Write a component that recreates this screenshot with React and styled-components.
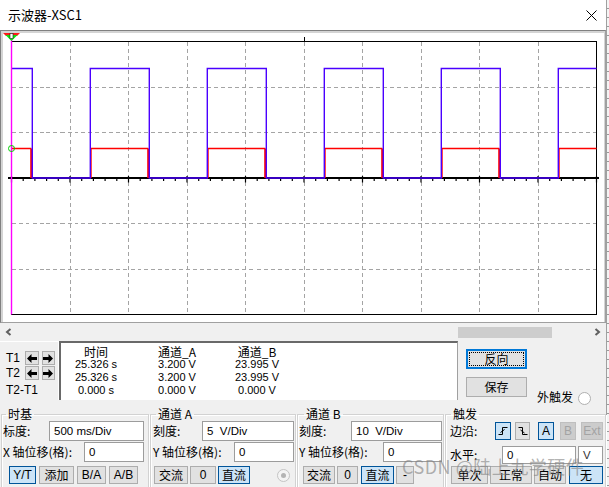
import React from 'react';
import styled, { createGlobalStyle } from 'styled-components';

const CJK = '"Noto Sans CJK SC", "Noto Sans", sans-serif';
const LATIN = '"Liberation Sans", "Noto Sans CJK SC", sans-serif';

const GlobalStyle = createGlobalStyle`
  html, body { margin: 0; padding: 0; }
  body {
    width: 609px; height: 487px; overflow: hidden;
    background: #f0f0f0; font-family: ${CJK}; color: #000;
  }
  * { box-sizing: border-box; }
`;

const Screen = styled.div`
  position: relative; display: flex; width: 609px; height: 487px; overflow: hidden;
`;
const Window = styled.div`
  width: 607px; height: 487px; flex: none; display: flex; flex-direction: column;
  border-right: 1px solid #a0a0a0; background: #f0f0f0;
`;
const Behind = styled.div`
  flex: 1;
  background: repeating-linear-gradient(to bottom, #f4f4f4 0 8px, #9a9a9a 8px 9px);
`;
const TitleBar = styled.div`
  height: 30px; flex: none; background: #fff; display: flex; align-items: center;
  justify-content: space-between; padding: 0 9px 0 8px;
`;
const Title = styled.span`font-size: 13px; line-height: 16px;`;

const ScopeFrame = styled.div`
  height: 293px; flex: none; display: flex;
  border-top: 1px solid #808080; border-left: 1px solid #808080;
  border-right: 1px solid #a0a0a0; border-bottom: 1px solid #a0a0a0;
  padding: 2px 1px 0 2px; background: #d4d4d4;
`;
const PlotArea = styled.div`flex: 1; background: #fff; overflow: hidden; display: flex;`;

const ScrollRow = styled.div`
  height: 18px; flex: none; display: flex; align-items: center; padding: 0 5px;
`;
const Track = styled.div`
  flex: 1; height: 100%; display: flex; align-items: center; padding-left: ${p => p.$offset}px;
`;
const Thumb = styled.div`width: 94px; height: 11px; background: #cdcdcd;`;

const Panel = styled.div`flex: 1; min-height: 0; display: flex; flex-direction: column;`;
const TopRow = styled.div`height: 59px; flex: none; display: flex;`;

const CursorPanel = styled.div`
  width: 59px; flex: none; border-top: 1px solid #fff; border-right: 1px solid #fff;
  padding: 9px 0 0 6px; display: flex; flex-direction: column;
`;
const CursorRow = styled.div`
  display: flex; align-items: center; height: 14px; margin-top: ${p => p.$mt || 0}px;
`;
const CursorLabel = styled.span`
  width: 20px; font-family: ${LATIN}; font-size: 12px; line-height: 14px;
`;
const ArrowBtn = styled.div`
  width: 14px; height: 14px; margin-right: 3px; background: #e1e1e1; border: 1px solid #adadad;
  display: flex; align-items: center; justify-content: center;
`;
const DiffLabel = styled.div`
  margin-top: 3px; font-family: ${LATIN}; font-size: 12px; line-height: 14px;
`;

const Readout = styled.div`
  width: 399px; flex: none; background: #fff;
  border-top: 2px solid #696969; border-left: 2px solid #696969; border-right: 1px solid #a0a0a0;
  padding-top: 2px; display: grid; grid-template-columns: 70px 92px 68px;
  grid-auto-rows: 13px; align-content: start;
`;
const HeadCell = styled.div`font-size: 12px; line-height: 13px; text-align: center; white-space: nowrap;`;
const ValueCell = styled.div`
  font-family: ${LATIN}; font-size: 11px; line-height: 13px; text-align: center; white-space: nowrap;
`;

const SideControls = styled.div`
  flex: 1; padding: 8px 0 0 8px; display: flex; flex-direction: column;
`;
const SideRow = styled.div`display: flex; align-items: flex-start; margin-top: ${p => p.$mt || 0}px;`;
const PushButton = styled.div`
  width: 61px; height: 20px; flex: none; background: #e1e1e1;
  border: 1px solid ${p => (p.$focused ? '#0078d7' : '#adadad')};
  box-shadow: ${p => (p.$focused ? 'inset 0 0 0 1px #0078d7' : 'none')};
  padding: ${p => (p.$focused ? '2px' : '0')};
  display: flex; align-items: stretch; justify-content: stretch;
  font-size: 12px; line-height: 14px;
`;
const FocusRing = styled.div`
  flex: 1; display: flex; align-items: center; justify-content: center;
  border: 1px dotted ${p => (p.$on ? '#000' : 'transparent')};
`;
const ExtLabel = styled.span`margin: 13px 0 0 10px; font-size: 12px; line-height: 14px;`;
const RadioRing = styled.div`
  width: 13px; height: 13px; border-radius: 50%; flex: none;
  border: 1px solid ${p => p.$ring || '#a9a9a9'}; background: ${p => p.$bg || '#fff'};
  margin: ${p => p.$m || '0'};
  display: flex; align-items: center; justify-content: center;
`;
const RadioDot = styled.div`width: 5px; height: 5px; border-radius: 50%; background: #b4b4b4;`;

const GroupRow = styled.div`
  flex: 1; min-height: 0; display: flex; gap: 1px; padding: 7px 0 0 1px;
`;
const Group = styled.fieldset`
  width: ${p => p.$w}px; height: 96px; flex: none; margin: 0; min-width: 0;
  padding: 0 ${p => p.$pr}px 0 ${p => p.$pl}px;
  border: 1px solid #d2d2d2; box-shadow: inset 1px 1px 0 #fff, 1px 1px 0 #fff;
`;
const Legend = styled.legend`
  margin-left: ${p => p.$ml}px; padding: 0 2px; font-size: 12px; line-height: 14px;
`;
const FieldRow = styled.div`
  display: flex; align-items: center; justify-content: space-between;
  height: ${p => p.$h || 20}px; margin-top: ${p => p.$mt || 0}px;
  padding-left: ${p => p.$pl || 0}px;
`;
const FieldLabel = styled.span`font-size: 12px; line-height: 16px; white-space: nowrap;`;
const Field = styled.div`
  width: ${p => p.$w}px; height: ${p => p.$h || 20}px; flex: none; background: #fff;
  border: 1px solid #9c9c9c; padding: 0 4px; display: flex; align-items: center;
  font-family: ${LATIN}; font-size: 11.5px; white-space: pre; color: ${p => p.$color || '#000'};
`;
const ButtonStrip = styled.div`
  display: flex; align-items: center; gap: ${p => p.$gap || 2}px;
  margin-left: ${p => (p.$auto ? 'auto' : '0')};
`;
const Btn = styled.div`
  width: ${p => p.$w}px; height: 18px; flex: none; margin-left: ${p => p.$ml || 0}px;
  display: flex; align-items: center; justify-content: center;
  font-family: ${p => (p.$latin ? LATIN : CJK)}; font-size: 12px; line-height: 14px;
  background: ${p => (p.$sel ? '#cce4f7' : p.$off ? '#cccccc' : '#e1e1e1')};
  border: 1px solid ${p => (p.$sel ? '#005499' : p.$off ? '#bfbfbf' : '#adadad')};
  color: ${p => (p.$off ? '#a3a3a3' : '#000')};
`;

const Watermark = styled.div`
  position: absolute; left: 402px; top: 454px; pointer-events: none;
  font-family: ${CJK}; font-size: 18px; line-height: 24px; letter-spacing: 0.5px;
  color: rgba(130, 130, 130, 0.62); white-space: nowrap;
`;

/* ---------- drawings ---------- */

const CloseIcon = () => (
  <svg width="11" height="11" viewBox="0 0 11 11">
    <path d="M0.5 0.5 L10.5 10.5 M10.5 0.5 L0.5 10.5" stroke="#000" strokeWidth="1" />
  </svg>
);

const Chevron = ({ dir }) => (
  <svg width="7" height="8" viewBox="0 0 7 8">
    <polyline
      points={dir === 'left' ? '5.5,1 2,4 5.5,7' : '1.5,1 5,4 1.5,7'}
      fill="none" stroke="#606060" strokeWidth="2"
    />
  </svg>
);

const Arrow = ({ dir }) => (
  <svg width="10" height="9" viewBox="0 0 10 9">
    <polygon
      points={dir === 'left'
        ? '0,4.5 4.5,0 4.5,3 10,3 10,6 4.5,6 4.5,9'
        : '10,4.5 5.5,0 5.5,3 0,3 0,6 5.5,6 5.5,9'}
      fill="#000"
    />
  </svg>
);

const EdgeIcon = ({ falling }) => (
  <svg width="12" height="12" viewBox="0 0 12 12">
    <path
      d={falling ? 'M1.5 2.5 H5.5 V9.5 H10.5' : 'M1.5 9.5 H5.5 V2.5 H10.5'}
      fill="none" stroke="#000" strokeWidth="1"
    />
    <path d={falling ? 'M3.5 5 L7.5 8' : 'M3.5 7.5 L7.5 4.5'} stroke="#000" strokeWidth="1" />
  </svg>
);

const L = 11.5, R = 596.5, T = 41.5, dx = 58.5, dy = 45.5;
const B = T + 6 * dy;
const CY = T + 3 * dy;
const HIGH_B = 68.5, HIGH_A = 148.5;
const RISES = [90.3, 207.3, 324.3, 441.3, 558.3];

function bluePath() {
  let d = `M${L} ${HIGH_B} H32.3 V${CY}`;
  RISES.forEach((r) => {
    const f = r + 59;
    d += ` H${r} V${HIGH_B}`;
    d += f < R ? ` H${f} V${CY}` : ` H${R}`;
  });
  return d;
}

function redPath() {
  let d = `M${L} ${HIGH_A} H31.3`;
  RISES.forEach((r) => {
    const f = Math.min(r + 58, R);
    d += ` M${r + 0.7} ${CY} V${HIGH_A} H${f}`;
  });
  return d;
}

const redFalls = [31.3, ...RISES.map(r => r + 58).filter(x => x < R)];

function Scope() {
  const vGrid = Array.from({ length: 9 }, (_, i) => L + (i + 1) * dx);
  const hGrid = [1, 2, 4, 5].map(j => T + j * dy);
  const ticks = [];
  for (let k = 0; k <= 50; k++) {
    const x = L + (k * dx) / 5;
    const major = k % 5 === 0;
    ticks.push(
      <line key={k} x1={x} x2={x} y1={major ? CY - 2 : CY} y2={major ? CY + 4.5 : CY + 3}
        stroke="#000" strokeWidth="1.2" />
    );
  }
  return (
    <svg width="601" height="289" viewBox="0 0 601 289">
      <g transform="translate(-3 -33)">
        <g stroke="#a4a4a4" strokeWidth="1" strokeDasharray="4 3" shapeRendering="crispEdges">
          {vGrid.map(x => <line key={x} x1={x} x2={x} y1={T} y2={B} />)}
          {hGrid.map(y => <line key={y} x1={L} x2={R} y1={y} y2={y} />)}
        </g>
        <g stroke="#000" strokeWidth="1" shapeRendering="crispEdges" fill="none">
          <line x1={L} x2={R} y1={T} y2={T} />
          <line x1={R} x2={R} y1={T} y2={B} />
          <line x1={L} x2={R} y1={B} y2={B} />
          <line x1={L} x2={L} y1={T} y2={B} />
          <line x1="8" x2="599" y1={CY} y2={CY} strokeWidth="1.5" />
          <line x1="304" x2="304" y1="37" y2={T} />
        </g>
        {ticks}
        <path d={redPath()} fill="none" stroke="#ff0000" strokeWidth="1.4" />
        {redFalls.map(x => (
          <line key={x} x1={x} x2={x} y1={HIGH_A} y2={CY} stroke="#ff0000" strokeWidth="2.2" />
        ))}
        <path d={bluePath()} fill="none" stroke="#4a00ff" strokeWidth="1.4" />
        <line x1={L} x2={L} y1="37" y2={B} stroke="#ff00ff" strokeWidth="1.4" />
        <circle cx={L} cy={HIGH_A} r="3" fill="none" stroke="#00cc00" strokeWidth="1" />
        <polygon points="3,33 20,33 17,36 6,36" fill="#ff1a1a" />
        <polygon points="5.5,35 17.5,35 11.5,41" fill="#11dd11" />
        <rect x="10" y="33.5" width="3" height="5" fill="#fff" stroke="#222" strokeWidth="0.6" />
      </g>
    </svg>
  );
}

/* ---------- data ---------- */

const readings = [
  ['25.326 s', '3.200 V', '23.995 V'],
  ['25.326 s', '3.200 V', '23.995 V'],
  ['0.000 s', '0.000 V', '0.000 V'],
];

export default function App() {
  return (
    <>
      <GlobalStyle />
      <Screen>
        <Window>
          <TitleBar>
            <Title>示波器-XSC1</Title>
            <CloseIcon />
          </TitleBar>

          <ScopeFrame>
            <PlotArea>
              <Scope />
            </PlotArea>
          </ScopeFrame>

          <ScrollRow>
            <Chevron dir="left" />
            <Track $offset={446}>
              <Thumb />
            </Track>
            <Chevron dir="right" />
          </ScrollRow>

          <Panel>
            <TopRow>
              <CursorPanel>
                <CursorRow>
                  <CursorLabel>T1</CursorLabel>
                  <ArrowBtn><Arrow dir="left" /></ArrowBtn>
                  <ArrowBtn><Arrow dir="right" /></ArrowBtn>
                </CursorRow>
                <CursorRow $mt={1}>
                  <CursorLabel>T2</CursorLabel>
                  <ArrowBtn><Arrow dir="left" /></ArrowBtn>
                  <ArrowBtn><Arrow dir="right" /></ArrowBtn>
                </CursorRow>
                <DiffLabel>T2-T1</DiffLabel>
              </CursorPanel>

              <Readout>
                <HeadCell>时间</HeadCell>
                <HeadCell>通道_A</HeadCell>
                <HeadCell>通道_B</HeadCell>
                {readings.map((row, i) =>
                  row.map((v, j) => <ValueCell key={`${i}-${j}`}>{v}</ValueCell>)
                )}
              </Readout>

              <SideControls>
                <PushButton $focused>
                  <FocusRing $on>反向</FocusRing>
                </PushButton>
                <SideRow $mt={8}>
                  <PushButton>
                    <FocusRing>保存</FocusRing>
                  </PushButton>
                  <ExtLabel>外触发</ExtLabel>
                  <RadioRing $m="15px 0 0 5px" $ring="#b0b0b0" />
                </SideRow>
              </SideControls>
            </TopRow>

            <GroupRow>
              <Group $w={148} $pl={1} $pr={4}>
                <Legend $ml={3}>时基</Legend>
                <FieldRow>
                  <FieldLabel>标度:</FieldLabel>
                  <Field $w={95}>500 ms/Div</Field>
                </FieldRow>
                <FieldRow $mt={1}>
                  <FieldLabel>X 轴位移(格):</FieldLabel>
                  <Field $w={60}>0</Field>
                </FieldRow>
                <FieldRow $mt={4} $h={18} $pl={6}>
                  <ButtonStrip $gap={3}>
                    <Btn $w={27} $sel $latin>Y/T</Btn>
                    <Btn $w={35}>添加</Btn>
                    <Btn $w={29} $latin>B/A</Btn>
                    <Btn $w={29} $latin>A/B</Btn>
                  </ButtonStrip>
                </FieldRow>
              </Group>

              <Group $w={146} $pl={2} $pr={1}>
                <Legend $ml={3}>通道 A</Legend>
                <FieldRow>
                  <FieldLabel>刻度:</FieldLabel>
                  <Field $w={92}>5  V/Div</Field>
                </FieldRow>
                <FieldRow $mt={1}>
                  <FieldLabel>Y 轴位移(格):</FieldLabel>
                  <Field $w={60}>0</Field>
                </FieldRow>
                <FieldRow $mt={4} $h={18} $pl={1}>
                  <ButtonStrip>
                    <Btn $w={34}>交流</Btn>
                    <Btn $w={26} $latin>0</Btn>
                    <Btn $w={32} $sel>直流</Btn>
                  </ButtonStrip>
                  <RadioRing $m="0 4px 0 0" $ring="#c4c4c4" $bg="#f4f4f4">
                    <RadioDot />
                  </RadioRing>
                </FieldRow>
              </Group>

              <Group $w={147} $pl={1} $pr={1}>
                <Legend $ml={5}>通道 B</Legend>
                <FieldRow>
                  <FieldLabel>刻度:</FieldLabel>
                  <Field $w={91}>10  V/Div</Field>
                </FieldRow>
                <FieldRow $mt={1}>
                  <FieldLabel>Y 轴位移(格):</FieldLabel>
                  <Field $w={59}>0</Field>
                </FieldRow>
                <FieldRow $mt={4} $h={18} $pl={4}>
                  <ButtonStrip>
                    <Btn $w={32}>交流</Btn>
                    <Btn $w={21} $latin>0</Btn>
                    <Btn $w={33} $ml={1} $sel>直流</Btn>
                    <Btn $w={18} $latin>-</Btn>
                  </ButtonStrip>
                </FieldRow>
              </Group>

              <Group $w={161} $pl={4} $pr={2}>
                <Legend $ml={1}>触发</Legend>
                <FieldRow>
                  <FieldLabel>边沿:</FieldLabel>
                  <ButtonStrip $auto $gap={0}>
                    <Btn $w={16} $sel><EdgeIcon /></Btn>
                    <Btn $w={15} $ml={2}><EdgeIcon falling /></Btn>
                    <Btn $w={16} $ml={6} $sel $latin>A</Btn>
                    <Btn $w={16} $ml={4} $off $latin>B</Btn>
                    <Btn $w={22} $ml={3} $off $latin>Ext</Btn>
                  </ButtonStrip>
                </FieldRow>
                <FieldRow $mt={5} $h={18}>
                  <FieldLabel>水平:</FieldLabel>
                  <ButtonStrip $auto>
                    <Field $w={74} $h={18}>0</Field>
                    <Field $w={25} $h={18} $color="#333">V</Field>
                  </ButtonStrip>
                </FieldRow>
                <FieldRow $mt={2} $h={18} $pl={1}>
                  <ButtonStrip $gap={2}>
                    <Btn $w={37}>单次</Btn>
                    <Btn $w={42}>正常</Btn>
                    <Btn $w={32}>自动</Btn>
                    <Btn $w={34} $ml={1} $sel>无</Btn>
                  </ButtonStrip>
                </FieldRow>
              </Group>
            </GroupRow>
          </Panel>
        </Window>
        <Behind />
        <Watermark>CSDN @陆上九学硬件</Watermark>
      </Screen>
    </>
  );
}
